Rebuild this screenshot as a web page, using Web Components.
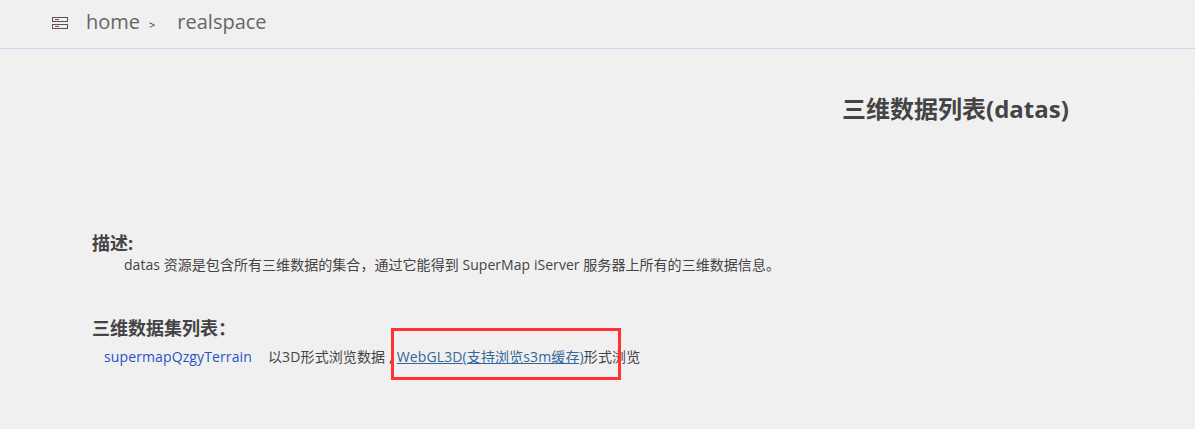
<!DOCTYPE html>
<html>
<head>
<meta charset="utf-8">
<style>
html, body { margin: 0; background: #f0f0f0; }
body { font-family: "Open Sans", "Noto Sans CJK SC", sans-serif; color: #444; min-height: 429px; }
</style>
</head>
<body>
<top-nav></top-nav>
<page-title>三维数据列表(datas)</page-title>
<desc-section heading="描述:">datas 资源是包含所有三维数据的集合，通过它能得到 SuperMap iServer 服务器上所有的三维数据信息。</desc-section>
<data-list heading="三维数据集列表："></data-list>

<script>
class TopNav extends HTMLElement {
    constructor() {
        super();
        this.attachShadow({ mode: 'open' });
        this.shadowRoot.innerHTML =
            `<style>
            :host {
                display: flex;
                align-items: center;
                height: 43px;
                padding: 0 0 5px 52px;
                border-bottom: 1px solid #c9d8f2;
                color: #666;
                font-size: 20px;
            }
            svg { display: block; width: 16px; height: 14px; margin-right: 18px; }
            .sep { font-size: 11px; color: #333; margin: 5px 22px 0 9px; }
            a { color: inherit; text-decoration: none; }
            </style>
            <svg viewBox="0 0 16 14">
                <rect x="0.5" y="2.5" width="15" height="4" fill="none" stroke="#555"/>
                <rect x="0.5" y="9.5" width="15" height="4" fill="none" stroke="#555"/>
                <rect x="3" y="4" width="4" height="1" fill="#e22"/>
                <rect x="3" y="11" width="4" height="1" fill="#e22"/>
            </svg>
            <a href="#">home</a>
            <span class="sep">&gt;</span>
            <a href="#">realspace</a>`;
    }
}

class PageTitle extends HTMLElement {
    constructor() {
        super();
        this.attachShadow({ mode: 'open' });
        this.shadowRoot.innerHTML =
            `<style>
            :host {
                display: block;
                margin: 44px 0 0 95px;
                height: 139px;
                border-top: 1px solid #f5f5f7;
                padding-left: 747px;
                box-sizing: border-box;
            }
            h1 { margin: -1px 0 0; font-size: 24px; line-height: 32px; font-weight: 700; color: #444; white-space: nowrap; }
            </style>
            <h1><slot></slot></h1>`;
    }
}

class DescSection extends HTMLElement {
    constructor() {
        super();
        this.attachShadow({ mode: 'open' });
        this.shadowRoot.innerHTML =
            `<style>
            :host { display: block; padding-left: 92px; height: 84px; box-sizing: border-box; }
            h2 { margin: 0; font-size: 18px; line-height: 22px; font-weight: 700; color: #444; }
            p { margin: 1px 0 0 32px; font-size: 14px; line-height: 20px; letter-spacing: .05px; color: #444; white-space: nowrap; }
            </style>
            <h2></h2>
            <p><slot></slot></p>`;
        this.shadowRoot.querySelector('h2').textContent = this.getAttribute('heading');
    }
}

class DataList extends HTMLElement {
    constructor() {
        super();
        this.attachShadow({ mode: 'open' });
        this.shadowRoot.innerHTML =
            `<style>
            :host { display: block; position: relative; padding-left: 92px; }
            h2 { margin: -1px 0 0; font-size: 18px; line-height: 26px; font-weight: 700; color: #444; }
            .row { display: flex; margin: 6px 0 0 12px; font-size: 14px; line-height: 20px; letter-spacing: .12px; white-space: nowrap; color: #444; }
            .name { color: #2a50c8; text-decoration: none; margin-right: 16px; }
            .gl { color: #336699; text-decoration: underline; margin-left: 4px; }
            .mark {
                position: absolute;
                left: 391px;
                top: 13px;
                box-sizing: border-box;
                width: 230px;
                height: 52px;
                border: 3px solid #ff3333;
            }
            </style>
            <h2></h2>
            <div class="row">
                <a class="name" href="#">supermapQzgyTerrain</a>
                <span>以3D形式浏览数据 ,<a class="gl" href="#">WebGL3D(支持浏览s3m缓存)</a>形式浏览</span>
            </div>
            <div class="mark"></div>`;
        this.shadowRoot.querySelector('h2').textContent = this.getAttribute('heading');
    }
}

customElements.define('top-nav', TopNav);
customElements.define('page-title', PageTitle);
customElements.define('desc-section', DescSection);
customElements.define('data-list', DataList);
</script>
</body>
</html>
